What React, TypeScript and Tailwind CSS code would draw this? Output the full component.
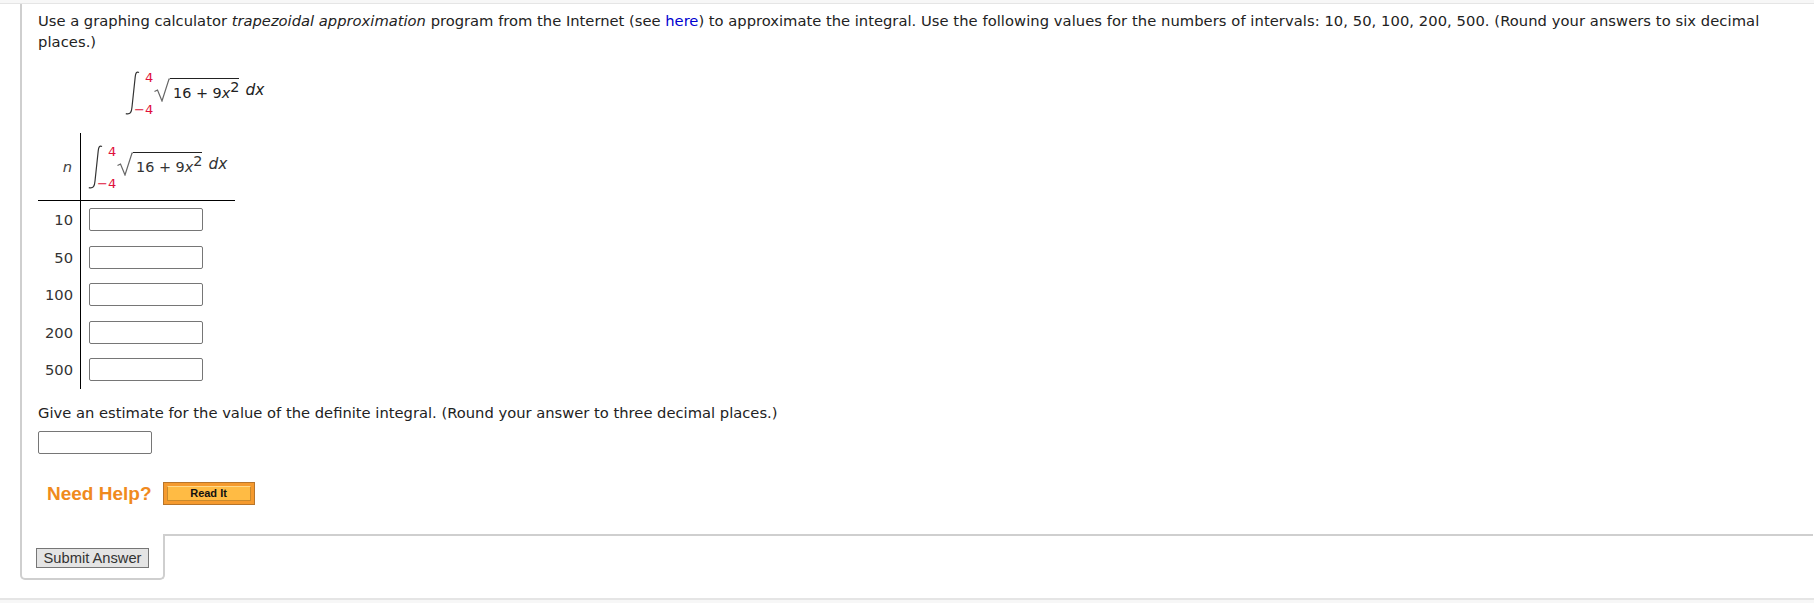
const verdana = "font-['DejaVu_Sans','Liberation_Sans',sans-serif]";

function Integrand({ color = "text-[#222]" }: { color?: string }) {
  return (
    <div className={`flex items-start ${color}`}>
      <div className="flex h-[46px] w-[30px] flex-col justify-between pt-[1px] text-[13px] leading-[13px] text-[#e0103a]">
        <span className="pl-[22px]">4</span>
        <span className="pl-[11px]">−4</span>
      </div>
      <svg className="-ml-[30px] shrink-0" width="30" height="46" viewBox="0 0 30 46" fill="none">
        <path d="M16 2.6 C13.8 1 12.6 3 12.2 7 L9 37 C8.6 42 7.5 44.8 2.8 43.6" stroke="#333" strokeWidth="1.2" />
      </svg>
      <svg className="ml-[1px] mt-[8px] shrink-0" width="16" height="24" viewBox="0 0 16 24" fill="none">
        <path d="M0.5 13.5 L3.5 12 L8 23 L15 1 L16 1" stroke="#666" strokeWidth="1.2" />
      </svg>
      <div className="mt-[8px] flex">
        <span className="block whitespace-nowrap border-t border-[#222] pl-[3px] pt-[4px] text-[14.4px] leading-[21px]">
          16 + 9<i>x</i>
          <span className="relative -top-[6px]">2</span>
        </span>
        <i className="ml-[6px] mt-[2px] text-[15.4px] leading-[21px]">dx</i>
      </div>
    </div>
  );
}

function Field({ className = "" }: { className?: string }) {
  return <input type="text" className={`block h-[23px] w-[114px] rounded-[2px] border border-[#767676] bg-white ${className}`} />;
}

const rows = ["10", "50", "100", "200", "500"];

export default function App() {
  return (
    <div className={`${verdana} h-[603px] bg-white text-[14.72px] leading-[21px] text-[#222]`}>
      <div className="h-[4px] border-b border-[#e5e5e5] bg-[#f7f7f7]" />
      <div className="ml-[20px] border-l-2 border-[#cfcfcf] pb-[29px] pl-[16px] pt-[6px]">
        <p className="w-[1745px]">
          Use a graphing calculator <i>trapezoidal approximation</i> program from the Internet (see{" "}
          <a className="text-[#0000d0]">here</a>) to approximate the integral.{" "}
          <span className="tracking-[0.06px]">Use the following values for the numbers of intervals: 10, 50, 100, 200, 500. (Round your answers to six decimal places.)</span>
        </p>
        <div className="ml-[85px] mt-[18px]">
          <Integrand />
        </div>
        <div className="mt-[17px] flex w-[197px] flex-col">
          <div className="flex h-[68px] border-b border-black">
            <div className="flex w-[42px] items-center justify-end pr-[8px] text-[#444]"><i>n</i></div>
            <div className="border-l border-black pl-[5px] pt-[11px]">
              <Integrand color="text-[#333]" />
            </div>
          </div>
          <div className="ml-[42px] flex h-[188px] flex-col gap-[14.5px] border-l border-black pl-[8px] pt-[7px]">
            {rows.map((r) => (
              <div key={r} className="relative h-[23px]">
                <span className="absolute -left-[50px] top-[1px] w-[34px] text-right text-[#333]">{r}</span>
                <Field />
              </div>
            ))}
          </div>
        </div>
        <p className="mt-[13px]">Give an estimate for the value of the definite integral. (Round your answer to three decimal places.)</p>
        <Field className="mt-[8px]" />
        <div className="ml-[9px] mt-[28px] flex items-center gap-[11px]">
          <span className="font-['Liberation_Sans',sans-serif] text-[19px] font-bold leading-[23px] text-[#f08a1d]">Need Help?</span>
          <button className="flex h-[23px] w-[92px] items-center justify-center border border-[#b8752a] bg-[#f59a2e] p-[3px]">
            <span className="flex h-[15px] w-full items-center justify-center rounded-[1px] border border-[#c98a2d] border-t-[#ffd98a] bg-[#ffbb44] font-['Liberation_Sans',sans-serif] text-[11px] font-bold leading-none text-[#111]">Read It</span>
          </button>
        </div>
      </div>
      <div className="ml-[20px] flex h-[46px] items-stretch">
        <div className="flex w-[145px] items-start rounded-b-[5px] border-b-2 border-l-2 border-r-2 border-[#cfcfcf] pl-[14px] pt-[14px]">
          <button className="h-[20px] w-[113px] border border-[#767676] bg-[#e4e4e4] font-['Liberation_Sans',sans-serif] text-[14.7px] leading-[18px] text-[#333]">Submit Answer</button>
        </div>
        <div className="mr-[1px] h-[2px] flex-1 bg-[#cfcfcf]" />
      </div>
      <div className="mt-[18px] h-[7px] border-t-2 border-[#e5e5e5] bg-[#f7f7f7]" />
    </div>
  );
}
